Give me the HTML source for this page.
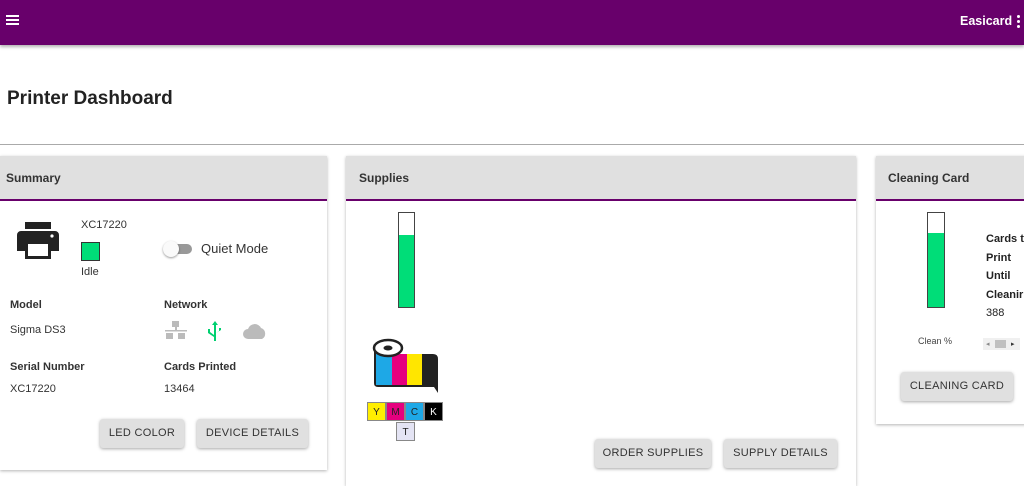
<!DOCTYPE html>
<html><head><style>
*{margin:0;padding:0;box-sizing:border-box}
body{width:1024px;height:477px;overflow:hidden;background:#fff;font-family:"Liberation Sans",sans-serif;color:#222;position:relative}
.a{position:absolute}
.hdr{left:0;top:0;width:1024px;height:45px;background:#68006b;box-shadow:0 2px 3px rgba(0,0,0,.3)}
.card{background:#fff;box-shadow:0 1px 3px rgba(0,0,0,.3)}
.ch{position:absolute;left:0;top:0;right:0;height:45px;background:#e0e0e0;border-bottom:2px solid #68006b;font-size:12px;font-weight:bold;color:#333;padding:15px 0 0 6px}
.t{font-size:11px;color:#333}
.b{font-size:11px;font-weight:bold;color:#333}
.btn{background:#e0e0e0;box-shadow:0 1px 3px rgba(0,0,0,.35);border-radius:3px;font-size:11px;color:#333;text-align:center;line-height:29px;height:29px;letter-spacing:.3px}
.bar{border:1px solid #444;background:#fff}
.bar div{position:absolute;left:0;right:0;bottom:0;background:#00dd78}
.cm{width:19px;height:19px;font-size:10px;text-align:center;line-height:19px;border:1px solid #888}
</style></head><body>
<div class="a hdr"></div>
<div class="a" style="left:6px;top:15px;width:13px;height:2px;background:#fff;box-shadow:0 4px 0 #fff,0 8px 0 #fff"></div>
<div class="a" style="left:960px;top:14px;color:#fff;font-size:12.5px;font-weight:bold">Easicard</div>
<div class="a" style="left:1017px;top:15px;width:3px;height:3px;background:#fff;border-radius:2px;box-shadow:0 5px 0 #fff,0 10px 0 #fff"></div>
<div class="a" style="left:7px;top:88px;font-size:19px;font-weight:bold;color:#222">Printer Dashboard</div>
<div class="a" style="left:0;top:144px;width:1024px;height:1px;background:#aaa"></div>

<div class="a card" style="left:0;top:156px;width:327px;height:314px"><div class="ch">Summary</div></div>
<svg class="a" style="left:17px;top:222px" width="42" height="37" viewBox="0 0 42 37"><rect x="8" y="0" width="26" height="7" fill="#222"/><path d="M4 9h34a4 4 0 0 1 4 4v16h-8v8H8v-8H0V13a4 4 0 0 1 4-4z" fill="#222"/><rect x="11" y="22" width="20" height="12" fill="#fff"/><circle cx="35" cy="14" r="1.6" fill="#fff"/></svg>
<div class="a t" style="left:81px;top:219px">XC17220</div>
<div class="a" style="left:81px;top:242px;width:19px;height:19px;background:#00dd78;border:1px solid #333"></div>
<div class="a t" style="left:81px;top:266px">Idle</div>
<div class="a" style="left:165px;top:244px;width:27px;height:10px;border-radius:5px;background:#999"></div>
<div class="a" style="left:163px;top:241px;width:16px;height:16px;border-radius:8px;background:#fafafa;box-shadow:0 1px 2px rgba(0,0,0,.4)"></div>
<div class="a" style="left:201px;top:241px;font-size:13px;color:#333">Quiet Mode</div>
<div class="a b" style="left:10px;top:299px">Model</div>
<div class="a t" style="left:10px;top:324px">Sigma DS3</div>
<div class="a b" style="left:164px;top:299px">Network</div>
<svg class="a" style="left:164px;top:320px" width="24" height="20"><rect x="8" y="1" width="7" height="6" fill="#bbb"/><rect x="11" y="7" width="2" height="4" fill="#bbb"/><rect x="1" y="10" width="22" height="1.5" fill="#bbb"/><rect x="2" y="13" width="7" height="6" fill="#bbb"/><rect x="14" y="13" width="7" height="6" fill="#bbb"/></svg>
<svg class="a" style="left:207px;top:320px" width="16" height="22" viewBox="0 0 16 22"><path d="M8 1l-3 4h2v10l-4-3v-3H1v4l6 4v4h2v-8l5-3V8h-2v3l-3 2V5h2z" fill="#00d070"/></svg>
<svg class="a" style="left:243px;top:322px" width="25" height="18"><path d="M5 17a5 5 0 0 1 0-10 7 7 0 0 1 13-1 6 6 0 0 1 1 11z" fill="#bbb"/></svg>
<div class="a b" style="left:10px;top:361px">Serial Number</div>
<div class="a t" style="left:10px;top:383px">XC17220</div>
<div class="a b" style="left:164px;top:361px">Cards Printed</div>
<div class="a t" style="left:164px;top:383px">13464</div>
<div class="a btn" style="left:100px;top:419px;width:84px">LED COLOR</div>
<div class="a btn" style="left:197px;top:419px;width:111px">DEVICE DETAILS</div>

<div class="a card" style="left:346px;top:156px;width:510px;height:330px"><div class="ch" style="padding-left:13px">Supplies</div></div>
<div class="a bar" style="left:398px;top:212px;width:17px;height:96px"><div style="height:72px"></div></div>
<svg class="a" style="left:372px;top:337px" width="70" height="58" viewBox="0 0 70 58">
<path d="M2 12v34q0 4 4 4h56l4 6V22q0-5-5-5H28" fill="#222"/>
<path d="M4 16q8 4 16 1v31H4z" fill="#1ea8e6"/>
<rect x="20" y="17" width="15" height="31" fill="#e5007e"/>
<rect x="35" y="17" width="15" height="31" fill="#ffe600"/>
<ellipse cx="16" cy="11" rx="14" ry="8" fill="#fff" stroke="#222" stroke-width="2.5"/>
<ellipse cx="16" cy="11" rx="4.5" ry="2.5" fill="#222"/></svg>
<div class="a" style="left:367px;top:402px;display:flex">
<div class="cm" style="background:#ffee00">Y</div><div class="cm" style="background:#e5007e">M</div><div class="cm" style="background:#1ea8e6">C</div><div class="cm" style="background:#000;color:#fff">K</div></div>
<div class="a cm" style="left:396px;top:422px;background:#e4e4f4">T</div>
<div class="a btn" style="left:595px;top:439px;width:116px">ORDER SUPPLIES</div>
<div class="a btn" style="left:724px;top:439px;width:113px">SUPPLY DETAILS</div>

<div class="a card" style="left:876px;top:156px;width:160px;height:268px"><div class="ch" style="padding-left:12px">Cleaning Card</div></div>
<div class="a bar" style="left:927px;top:212px;width:18px;height:96px"><div style="height:74px"></div></div>
<div class="a" style="left:918px;top:336px;font-size:9px;color:#444">Clean %</div>
<div class="a t" style="left:986px;top:230px;line-height:18.5px;color:#222;font-weight:bold">Cards t<br>Print<br>Until<br>Cleanir<br><span style="font-weight:normal">388</span></div>
<div class="a" style="left:983px;top:338px;width:37px;height:12px;background:#f0f0f0"><div class="a" style="left:12px;top:2px;width:11px;height:8px;background:#c0c0c0"></div><div class="a" style="left:3px;top:2px;font-size:7px;color:#888">◂</div><div class="a" style="left:28px;top:2px;font-size:7px;color:#333">▸</div></div>
<div class="a btn" style="left:901px;top:372px;width:112px">CLEANING CARD</div>
</body></html>
